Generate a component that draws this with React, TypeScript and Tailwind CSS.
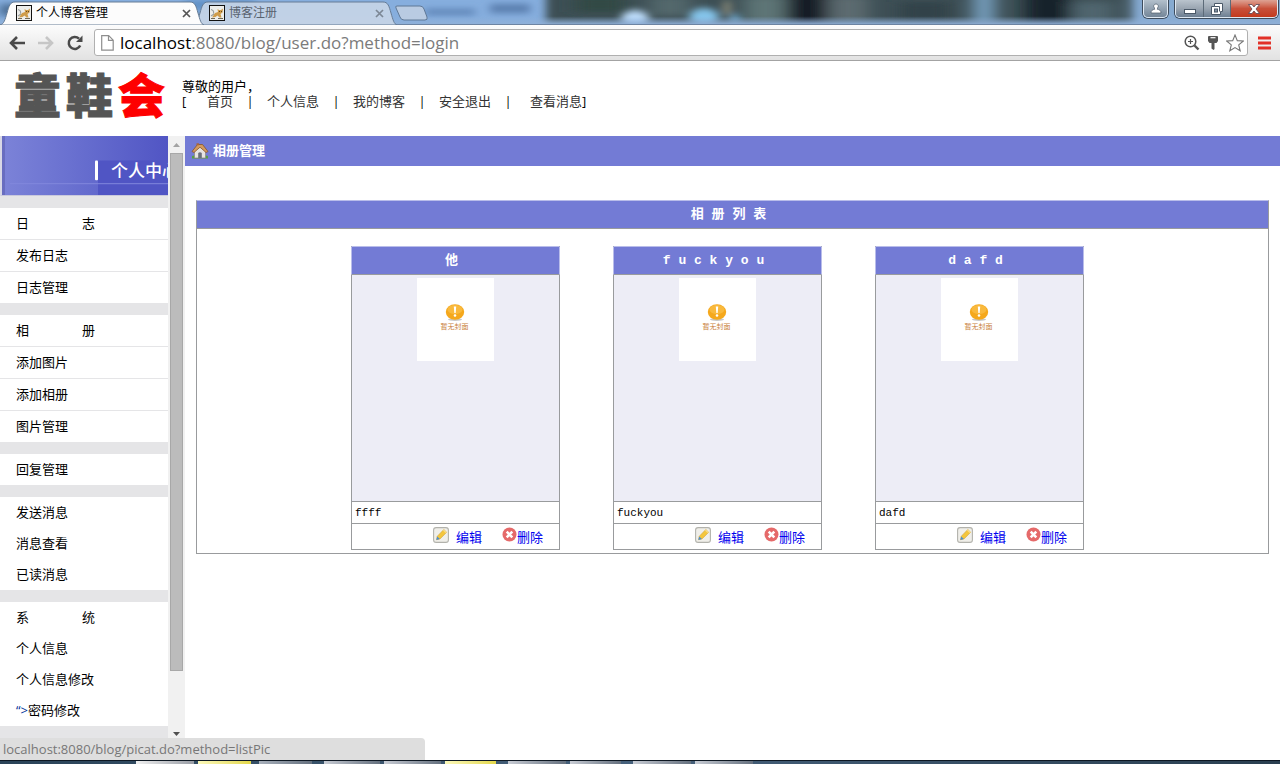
import React from "react";

const menuGroups: { divided: boolean; items: string[] }[] = [
  { divided: true, items: ["日|志", "发布日志", "日志管理"] },
  { divided: true, items: ["相|册", "添加图片", "添加相册", "图片管理"] },
  { divided: true, items: ["回复管理"] },
  { divided: false, items: ["发送消息", "消息查看", "已读消息"] },
  { divided: false, items: ["系|统", "个人信息", "个人信息修改", "“>密码修改"] },
];

const albums = [
  { title: "他", note: "ffff" },
  { title: "f u c k y o u", note: "fuckyou" },
  { title: "d a f d", note: "dafd" },
];

const navLinks = ["首页", "个人信息", "我的博客", "安全退出", "查看消息"];

function Backdrop() {
  return (
    <svg className="absolute inset-0 h-full w-full" viewBox="0 0 1280 25" preserveAspectRatio="none" aria-hidden="true">
      <defs>
        <filter id="soft" x="-20%" y="-50%" width="140%" height="200%">
          <feGaussianBlur stdDeviation="5 3" />
        </filter>
        <filter id="softer" x="-20%" y="-50%" width="140%" height="200%">
          <feGaussianBlur stdDeviation="9 3" />
        </filter>
        <linearGradient id="edge" x1="0" y1="0" x2="0" y2="1">
          <stop offset="0.65" stopColor="#8fb0d8" stopOpacity="0" />
          <stop offset="0.94" stopColor="#8fb0d8" stopOpacity="0.85" />
        </linearGradient>
      </defs>
      <rect width="1280" height="25" fill="#86aede" />
      <g filter="url(#soft)">
        <rect x="0" y="4" width="30" height="12" fill="#4d6f96" />
        <rect x="185" y="0" width="70" height="10" fill="#5f8fc4" />
        <rect x="425" y="9" width="50" height="6" fill="#5d83b5" />
        <rect x="490" y="4" width="40" height="9" fill="#5a7eae" />
        <rect x="546" y="-10" width="590" height="40" fill="#3d5054" />
      </g>
      <g filter="url(#softer)">
        <rect x="575" y="-4" width="50" height="16" fill="#334a44" />
        <rect x="650" y="-4" width="40" height="20" fill="#52686c" />
        <rect x="745" y="-4" width="45" height="26" fill="#5d7476" />
        <rect x="786" y="-10" width="42" height="36" fill="#131c26" />
        <rect x="828" y="-4" width="40" height="26" fill="#5b6b70" />
        <rect x="900" y="2" width="50" height="20" fill="#334348" />
        <rect x="974" y="-10" width="20" height="34" fill="#7ba6c8" />
        <rect x="1026" y="-10" width="44" height="36" fill="#18222a" />
        <rect x="1072" y="2" width="40" height="20" fill="#50656e" />
        <rect x="1134" y="-10" width="170" height="46" fill="#86aad0" />
      </g>
      <g filter="url(#soft)">
        <ellipse cx="635" cy="19" rx="14" ry="9" fill="#bcdcfa" />
        <ellipse cx="704" cy="17" rx="15" ry="9" fill="#84c4ea" />
        <ellipse cx="727" cy="8" rx="4" ry="9" fill="#8a8a78" />
        <ellipse cx="735" cy="19" rx="5" ry="5" fill="#6cabd2" />
      </g>
      <rect width="1280" height="25" fill="url(#edge)" />
      <rect y="24" width="1280" height="1" fill="#6d84a2" />
    </svg>
  );
}

function CatIcon() {
  return (
    <svg className="h-4 w-4 shrink-0" viewBox="0 0 16 16" aria-hidden="true">
      <rect x="0.5" y="0.5" width="15" height="15" fill="#ededea" stroke="#111" />
      <path d="M2 4.500c2 .500 3 2 2.500 4M2 11l3-2" fill="none" stroke="#9aa0a0" strokeWidth="1.2" />
      <path d="M3 12.500 6 8l3-1-.500-3 1.500 1h2l2-1.500-.500 4L11.500 9l1 3.500H10.500l-2-2-2 1.500z" fill="#cf9c4a" />
      <path d="M2 13.500h4M9 13.500h5" stroke="#6f6a5a" strokeWidth="1" />
      <path d="M10 6.500h.800M12.200 6.500h.800" stroke="#4d3413" strokeWidth="1" />
    </svg>
  );
}

function Tab({ title, active }: { title: string; active?: boolean }) {
  return (
    <div className={active ? "relative z-10 flex h-6 w-[204px] items-center" : "relative -ml-[11px] flex h-6 w-[204px] items-center"}>
      <svg className="absolute inset-0 h-full w-full" viewBox="0 0 204 24" preserveAspectRatio="none" aria-hidden="true">
        <path
          d="M0 24C4 23 5 19 7 12S10 1 15 1H190C195 1 196 5 198 12S201 23 204 24Z"
          fill={active ? "#fcfcfc" : "#c6d4e6"}
          fillOpacity={active ? "1" : "0.92"}
          stroke="#667c96"
          strokeWidth="1"
        />
      </svg>
      <button type="button" role="tab" aria-selected={!!active} className={active ? "relative ml-4 flex items-center gap-1 text-xs text-black" : "relative ml-4 flex items-center gap-1 text-xs text-[#58626f]"}>
        <CatIcon />
        {title}
      </button>
      <button type="button" aria-label="关闭标签页" className="relative ml-auto mr-[13px]">
        <svg className="h-[9px] w-[9px]" viewBox="0 0 9 9" aria-hidden="true">
          <path d="M1 1 8 8M8 1 1 8" stroke={active ? "#555" : "#7c8795"} strokeWidth="1.7" />
        </svg>
      </button>
    </div>
  );
}

function WindowButtons() {
  return (
    <div className="relative ml-auto mr-[2px] flex h-[18px] gap-[7px]">
      <button type="button" aria-label="用户" className="flex w-[25px] items-center justify-center rounded-b-[5px] border border-t-0 border-[#dfe8f2] bg-gradient-to-b from-[#b3c0cc] to-[#748698] ring-1 ring-[#3e4c5c]">
        <svg className="h-3 w-3" viewBox="0 0 12 12" aria-hidden="true">
          <path d="M6 1a2.200 2.200 0 0 1 1.600 3.800L7.300 6.300c2.200.300 3.700 1.200 3.700 3.700H1C1 7.500 2.500 6.600 4.700 6.300L4.400 4.800A2.200 2.200 0 0 1 6 1Z" fill="#fff" stroke="#4b5968" strokeWidth="0.700" />
        </svg>
      </button>
      <div className="flex overflow-hidden rounded-b-[5px] border border-t-0 border-[#dfe8f2] ring-1 ring-[#3e4c5c]">
        <button type="button" aria-label="最小化" className="flex w-[28px] items-center justify-center border-r border-[#5c6a78] bg-gradient-to-b from-[#bac4cd] via-[#9aa5b1] via-50% to-[#6d7f92]">
          <svg className="h-3 w-3" viewBox="0 0 12 12" aria-hidden="true">
            <rect x="0.500" y="6.500" width="11" height="4" fill="#fff" stroke="#4b5968" />
          </svg>
        </button>
        <button type="button" aria-label="还原" className="flex w-[27px] items-center justify-center border-r border-[#5c6a78] bg-gradient-to-b from-[#bac4cd] via-[#9aa5b1] via-50% to-[#6d7f92]">
          <svg className="h-3 w-3" viewBox="0 0 12 12" aria-hidden="true">
            <path d="M3.500.500h8v8h-2v3h-9v-8h3z" fill="#fff" stroke="#4b5968" />
            <path d="M3.500 3.500h5v5" fill="none" stroke="#4b5968" />
            <rect x="3.500" y="6" width="3" height="3" fill="#8795a4" stroke="#4b5968" />
          </svg>
        </button>
        <button type="button" aria-label="关闭" className="flex w-[46px] items-center justify-center bg-gradient-to-b from-[#dda294] via-[#c8503a] via-50% to-[#c33a1c]">
          <svg className="h-3 w-3" viewBox="0 0 12 12" aria-hidden="true">
            <path d="M.500 1.500h3.500l2 2.500 2-2.500h3.500L8 6l3.500 4.500H8L6 8l-2 2.500H.500L4 6z" fill="#fff" stroke="#5b4450" strokeWidth="0.800" />
          </svg>
        </button>
      </div>
    </div>
  );
}

function Toolbar() {
  return (
    <div className="flex h-9 shrink-0 items-center border-b border-[#a3a3a3] bg-gradient-to-b from-[#fcfcfc] to-[#e2e2e2] pl-[9px] pr-2">
      <button type="button" aria-label="后退" className="w-[29px]">
        <svg className="h-4 w-4" viewBox="0 0 16 16" aria-hidden="true">
          <path d="M8 2 2 8l6 6M2.500 8H16" fill="none" stroke="#4a4a4a" strokeWidth="2.600" />
        </svg>
      </button>
      <button type="button" aria-label="前进" className="w-[29px]">
        <svg className="h-4 w-4" viewBox="0 0 16 16" aria-hidden="true">
          <path d="M8 2l6 6-6 6M13.500 8H0" fill="none" stroke="#c6c6c6" strokeWidth="2.600" />
        </svg>
      </button>
      <button type="button" aria-label="重新加载" className="w-[27px]">
        <svg className="h-4 w-4" viewBox="0 0 16 16" aria-hidden="true">
          <path d="M13.200 10.500A6 6 0 1 1 12 3.700" fill="none" stroke="#4a4a4a" strokeWidth="2.500" />
          <path d="M15.500.500v6.500H9z" fill="#4a4a4a" />
        </svg>
      </button>
      <div className="flex h-[27px] min-w-0 flex-1 items-center rounded-[3px] border border-[#b0b0b0] bg-white px-[6px]">
        <svg className="mr-[6px] h-4 w-[13px] shrink-0" viewBox="0 0 13 16" aria-hidden="true">
          <path d="M.700.700h7l4.500 4.500v10H.700zM7.500.700v4.700h4.700" fill="#fff" stroke="#8e8e8e" strokeWidth="1.200" />
        </svg>
        <label htmlFor="address" className="text-[17px] leading-6 text-black">localhost</label>
        <input id="address" type="text" defaultValue=":8080/blog/user.do?method=login" className="min-w-0 flex-1 bg-transparent text-[17px] leading-6 text-[#7b7b7b] outline-none" />
        <div className="flex items-center gap-[5px]">
          <button type="button" aria-label="缩放">
            <svg className="h-4 w-4" viewBox="0 0 16 16" aria-hidden="true">
              <circle cx="6.500" cy="6.500" r="5.300" fill="none" stroke="#555" strokeWidth="1.500" />
              <path d="M4 6.500h5M6.500 4v5" stroke="#555" strokeWidth="1.200" />
              <path d="M10.500 10.500 14.500 14.500" stroke="#555" strokeWidth="2.400" />
            </svg>
          </button>
          <button type="button" aria-label="密码">
            <svg className="h-4 w-4" viewBox="0 0 16 16" aria-hidden="true">
              <path d="M4 1h8Q13 1 13 2v4L11.500 8h-2v6L8.500 15 6.500 13.500V8H4.500L3 6V2Q3 1 4 1Z" fill="#555" />
              <path d="M5.500 2.700h5" stroke="#fff" strokeWidth="1.200" />
            </svg>
          </button>
          <button type="button" aria-label="收藏" className="-mr-[3px]">
            <svg className="h-[18px] w-[18px]" viewBox="0 0 18 18" aria-hidden="true">
              <path d="m9 1 2.300 5.600 6 .400-4.600 3.900 1.500 5.900L9 13.600l-5.200 3.200 1.500-5.900L.700 7l6-.400z" fill="#fff" stroke="#777" strokeWidth="1.100" />
            </svg>
          </button>
        </div>
      </div>
      <button type="button" aria-label="菜单" className="ml-[9px]">
        <svg className="h-[14px] w-[15px]" viewBox="0 0 15 14" aria-hidden="true">
          <path d="M1 2h13M1 7h13M1 12h13" stroke="#e23128" strokeWidth="3" />
        </svg>
      </button>
    </div>
  );
}

function SiteHeader() {
  return (
    <header className="flex h-[75px] shrink-0 items-start pl-[14px] pt-[11px]">
      <div className="flex w-[168px] gap-[5px] text-[47px] font-black leading-[46px] text-[#555] [-webkit-text-stroke:1px_currentColor]">
        <span>童</span>
        <span>鞋</span>
        <span className="text-[#fe0000]">会</span>
      </div>
      <div className="pt-[7px] text-[13px] leading-[15px]">
        <p>尊敬的用户，</p>
        <nav className="flex">
          <span className="w-[25px]">[</span>
          <ul className="flex">
            {navLinks.map((label, i) => (
              <li key={label} className="flex">
                {i > 0 && <span className="w-[34px] text-center">|</span>}
                <a href="#" className={i === 4 ? "pl-[5px] text-[#333]" : "text-[#333]"}>{label}</a>
              </li>
            ))}
          </ul>
          <span>]</span>
        </nav>
      </div>
    </header>
  );
}

function Banner() {
  return (
    <div className="relative h-[60px] shrink-0 overflow-hidden border-b border-[#c9c9dc] border-l-2 border-l-[#d8d8e6] bg-gradient-to-r from-[#7c83d8] to-[#5155c4]">
      <svg className="absolute inset-0 h-full w-full" viewBox="0 0 166 60" preserveAspectRatio="none" aria-hidden="true">
        <rect width="3" height="60" fill="#686dc0" />
        <rect x="96" y="25" width="70" height="35" fill="#5055c4" />
        <rect x="8" y="48" width="158" height="1" fill="#8288dc" />
        <rect x="93" y="25" width="3" height="20" rx="1" fill="#fff" />
      </svg>
      <h2 className="relative whitespace-nowrap pl-[109px] pt-[23px] text-[17px] font-medium leading-6 text-white">个人中心</h2>
    </div>
  );
}

function MenuText({ label }: { label: string }) {
  if (label.includes("|")) {
    const [first, last] = label.split("|");
    return (
      <span className="flex w-[79px] justify-between">
        <span>{first}</span>
        <span>{last}</span>
      </span>
    );
  }
  if (label.startsWith("“>")) {
    return (
      <>
        <span className="text-[#003399]">“&gt;</span>
        {label.slice(2)}
      </>
    );
  }
  return <>{label}</>;
}

function Sidebar() {
  return (
    <aside className="flex w-[185px] shrink-0">
      <div className="flex min-w-0 flex-1 flex-col overflow-hidden">
        <Banner />
        <div className="flex flex-col gap-3 bg-[#e5e5e7] py-3">
          {menuGroups.map((group) => (
            <ul key={group.items[0]} className={group.divided ? "divide-y divide-[#e5e5e7] bg-white" : "bg-white"}>
              {group.items.map((item) => (
                <li key={item} className="box-content h-[31px]">
                  <a href="#" className="flex h-full items-center pb-[2px] pl-4 text-[13px] leading-4 text-black">
                    <MenuText label={item} />
                  </a>
                </li>
              ))}
            </ul>
          ))}
        </div>
      </div>
      <div className="mb-[21px] flex w-[17px] flex-col items-center bg-[#f1f1f1]" aria-hidden="true">
        <svg className="h-[17px] w-[17px] shrink-0" viewBox="0 0 17 17">
          <path d="M5 11h7L8.500 7z" fill="#a3a3a3" />
        </svg>
        <div className="min-h-0 w-full flex-1">
          <div className="mx-auto h-[91%] w-[13px] border border-[#a8a8a8] bg-[#bcbcbc]" />
        </div>
        <svg className="h-[17px] w-[17px] shrink-0" viewBox="0 0 17 17">
          <path d="M5 10h7l-3.500 4z" fill="#505050" />
        </svg>
      </div>
    </aside>
  );
}

function HouseIcon() {
  return (
    <svg className="h-4 w-[18px]" viewBox="0 0 18 16" aria-hidden="true">
      <path d="M1 13q8-3 16 0v2.500H1z" fill="#57a044" />
      <path d="M3.500 7.500 9 3l5.500 4.500V15h-11z" fill="#e6e4e2" stroke="#8b8680" strokeWidth="0.700" />
      <path d="M7.200 15v-5q1.800-1.600 3.600 0v5z" fill="#6b6f7a" />
      <path d="M1 8.500 6.500 1.500h5L17 8.500l-2 1L9 4.200 3 9.500z" fill="#d39a5e" stroke="#86552a" strokeWidth="0.800" />
      <path d="M5.500.300H8v2H5.500z" fill="#a8663a" />
    </svg>
  );
}

function Cover() {
  return (
    <div className="flex h-[83px] w-[77px] flex-col items-center bg-white pr-[2px] pt-[26px]">
      <svg className="h-[18px] w-5" viewBox="0 0 20 18" aria-hidden="true">
        <ellipse cx="10" cy="15.500" rx="7" ry="1.500" fill="#c8c8c8" />
        <ellipse cx="10" cy="8" rx="9.200" ry="7.700" fill="#f5a81c" />
        <ellipse cx="10" cy="5.500" rx="7.500" ry="4.500" fill="#fbc04c" fillOpacity="0.700" />
        <path d="M8.800 2.500h2.400L10.700 9H9.300z" fill="#fff" />
        <circle cx="10" cy="11.500" r="1.300" fill="#fff" />
      </svg>
      <span className="whitespace-nowrap text-[7px] leading-[10px] text-[#c9803a]">暂无封面</span>
    </div>
  );
}

function EditIcon() {
  return (
    <svg className="h-4 w-4" viewBox="0 0 16 16" aria-hidden="true">
      <rect x="0.600" y="0.600" width="14.800" height="14.800" rx="2.500" fill="#f0efea" stroke="#b2b2ac" strokeWidth="1.100" />
      <path d="m3.500 12.800.800-3.600 6.500-6.700 2.900 2.800-6.700 6.600z" fill="#f4c63c" stroke="#c99a2c" strokeWidth="0.500" />
      <path d="m10 3.400.900-.900 2.900 2.800-.900.900z" fill="#f8dc8c" />
      <path d="m3.300 13.100.900-3.700 2.700 2.600z" fill="#4e8fd0" />
    </svg>
  );
}

function DeleteIcon() {
  return (
    <svg className="h-[15px] w-[15px]" viewBox="0 0 15 15" aria-hidden="true">
      <circle cx="7.500" cy="7.500" r="7" fill="#e56a6a" />
      <path d="m4.700 4.700 5.600 5.600M10.300 4.700l-5.600 5.600" stroke="#fff" strokeWidth="2.600" />
    </svg>
  );
}

function AlbumCard({ title, note }: { title: string; note: string }) {
  return (
    <article className="w-[209px] border border-[#999b9d] border-t-[#b9bdea] text-[13px]">
      <h3 className="-mx-px h-7 border-x border-b border-x-[#b9bdea] border-b-[#999b9d] bg-[#737bd5] pr-2 text-center font-['Liberation_Mono','Noto_Sans_CJK_SC',monospace] font-bold leading-7 text-white">
        {title}
      </h3>
      <div className="flex h-[226px] justify-center bg-[#ededf6] pt-[3px]">
        <Cover />
      </div>
      <p className="h-[23px] border-y border-[#999b9d] pl-[3px] font-['Liberation_Mono','Noto_Sans_CJK_SC',monospace] text-[11px] leading-[22px]">{note}</p>
      <div className="flex h-[25px] justify-end pr-4 pt-[3px] leading-[21px] text-[#0000ee]">
        <a href="#" className="flex items-start gap-[7px]">
          <EditIcon />
          编辑
        </a>
        <a href="#" className="ml-5 flex items-start">
          <DeleteIcon />
          删除
        </a>
      </div>
    </article>
  );
}

function AlbumPage() {
  return (
    <main className="min-w-0 flex-1">
      <h1 className="flex h-[30px] items-center gap-1 bg-[#737bd5] pl-[6px] text-[13px] font-bold text-white">
        <HouseIcon />
        相册管理
      </h1>
      <section className="mx-[11px] mt-[34px] border border-[#999b9d] border-t-[#b9bdea]">
        <h2 className="h-7 border-b border-[#999b9d] bg-[#737bd5] pr-2 text-center font-['Liberation_Mono','Noto_Sans_CJK_SC',monospace] text-[13px] font-bold leading-7 text-white">相 册 列 表</h2>
        <div className="flex justify-center gap-[53px] pb-[3px] pr-[30px] pt-[17px]">
          {albums.map((album) => (
            <AlbumCard key={album.title} title={album.title} note={album.note} />
          ))}
        </div>
      </section>
    </main>
  );
}

function Taskbar() {
  return (
    <div className="flex h-1 shrink-0 gap-1 overflow-hidden border-t border-[#0d1722] bg-gradient-to-r from-[#2a4358] via-[#46617c] to-[#2a3f50] pl-[136px]" aria-hidden="true">
      <div className="w-[58px] bg-gradient-to-r from-[#f0f0f0] to-[#9a9ea6]" />
      <div className="w-[53px] bg-gradient-to-r from-[#fbf8b8] to-[#e4d848]" />
      <div className="ml-1 w-[53px] bg-gradient-to-r from-[#a8b0bb] to-[#66717f]" />
      <div className="ml-2 w-[56px] bg-gradient-to-r from-[#c8ccd4] to-[#66717f]" />
      <div className="w-[57px] bg-gradient-to-r from-[#c8ccd4] to-[#66717f]" />
      <div className="w-[51px] bg-gradient-to-r from-[#fbf8b8] to-[#e4d848]" />
      <div className="ml-2 w-[58px] bg-gradient-to-r from-[#c8ccd4] to-[#66717f]" />
      <div className="w-[51px] bg-gradient-to-r from-[#c8ccd4] to-[#66717f]" />
      <div className="ml-2 w-[58px] bg-gradient-to-r from-[#c8ccd4] to-[#66717f]" />
      <div className="w-[58px] bg-gradient-to-r from-[#c8ccd4] to-[#66717f]" />
    </div>
  );
}

export default function App() {
  return (
    <div className="flex h-screen flex-col overflow-hidden bg-white font-['Open_Sans','Noto_Sans_CJK_SC',sans-serif] text-black">
      <div className="relative flex h-[25px] shrink-0 items-start">
        <Backdrop />
        <div className="relative flex pt-px" role="tablist">
          <Tab title="个人博客管理" active />
          <Tab title="博客注册" />
        </div>
        <button type="button" aria-label="新标签页" className="relative -ml-[3px] mt-[5px]">
          <svg className="h-4 w-[34px]" viewBox="0 0 34 16" aria-hidden="true">
            <path d="M3 1h23q3 0 4 3l3 8q1 3-2 3H10q-3 0-4-3L2 3q-1-2 1-2Z" fill="#b9cbe2" stroke="#5f7896" />
          </svg>
        </button>
        <WindowButtons />
      </div>
      <Toolbar />
      <SiteHeader />
      <div className="relative flex min-h-0 flex-1">
        <Sidebar />
        <AlbumPage />
        <div className="absolute bottom-0 left-0 h-[22px] w-[425px] rounded-tr-[4px] bg-[#dedede] pl-[3px] text-[13px] leading-[22px] text-[#777]">
          localhost:8080/blog/picat.do?method=listPic
        </div>
      </div>
      <Taskbar />
    </div>
  );
}
